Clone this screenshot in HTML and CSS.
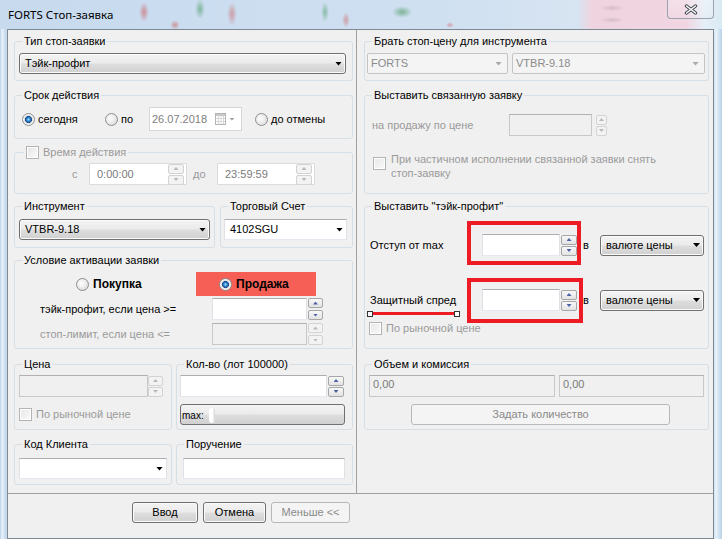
FILE: index.html
```html
<!DOCTYPE html>
<html lang="ru">
<head>
<meta charset="utf-8">
<title>FORTS Стоп-заявка</title>
<link rel="stylesheet" href="styles.css">
</head>
<body>
<div class="window">
  <header class="titlebar">
    <span class="title">FORTS Стоп-заявка</span>
    <span class="close-btn" aria-label="Закрыть">
      <svg width="14" height="11" viewBox="0 0 14 11"><path d="M2.5 2 L11.5 9 M11.5 2 L2.5 9" stroke="#3f4650" stroke-width="3.4" stroke-linecap="round" fill="none"/><path d="M2.5 2 L11.5 9 M11.5 2 L2.5 9" stroke="#fff" stroke-width="1.5" stroke-linecap="round" fill="none"/></svg>
    </span>
  </header>
  <main class="client">
    <div class="panes">
      <section class="pane pane-left">
        <fieldset class="grp g-type">
          <legend>Тип стоп-заявки</legend>
          <div class="combo combo-btn w-type"><span>Тэйк-профит</span><i class="tri"></i></div>
        </fieldset>

        <fieldset class="grp g-term">
          <legend>Срок действия</legend>
          <div class="term-row">
            <span class="opt w-today"><i class="radio on"></i>сегодня</span>
            <span class="opt w-po"><i class="radio"></i>по</span>
            <span class="date-box"><span class="date-text">26.07.2018</span><svg class="cal" width="11" height="12" viewBox="0 0 11 12"><rect x="0.5" y="0.5" width="10" height="11" fill="#fff" stroke="#b5b5b5"/><rect x="1" y="1" width="9" height="2" fill="#c8c8c8"/><path d="M1 5.5h9M1 8.5h9M3.5 3v8M6 3v8M8.5 3v8" stroke="#d8d8d8" stroke-width="1"/></svg><i class="tri tri-s"></i></span>
            <span class="opt"><i class="radio"></i>до отмены</span>
          </div>
        </fieldset>

        <fieldset class="grp g-time">
          <legend class="lg-check"><i class="check"></i><span class="dis-text">Время действия</span></legend>
          <div class="time-row">
            <span class="t-lbl t-s dis-text">с</span>
            <span class="time-box"><span class="time-text">0:00:00</span><span class="spin dis"><span class="sb"><i class="up"></i></span><span class="sb"><i class="dn"></i></span></span></span>
            <span class="t-lbl t-do dis-text">до</span>
            <span class="time-box"><span class="time-text">23:59:59</span><span class="spin dis"><span class="sb"><i class="up"></i></span><span class="sb"><i class="dn"></i></span></span></span>
          </div>
        </fieldset>

        <div class="pair pair-inst">
          <fieldset class="grp g-inst">
            <legend>Инструмент</legend>
            <div class="combo combo-btn w-inst"><span>VTBR-9.18</span><i class="tri"></i></div>
          </fieldset>
          <fieldset class="grp g-acc">
            <legend>Торговый Счет</legend>
            <div class="combo combo-white w-acc"><span>4102SGU</span><i class="tri"></i></div>
          </fieldset>
        </div>

        <fieldset class="grp g-cond">
          <legend>Условие активации заявки</legend>
          <div class="side-row">
            <span class="opt bold w-buy"><i class="radio"></i>Покупка</span>
            <span class="opt bold sell"><i class="radio on"></i>Продажа</span>
          </div>
          <div class="price-row">
            <span class="p-lbl">тэйк-профит, если цена &gt;=</span>
            <span class="edit w-cond"></span>
            <span class="spin"><span class="sb"><i class="up"></i></span><span class="sb"><i class="dn"></i></span></span>
          </div>
          <div class="price-row r2">
            <span class="p-lbl dis-text">стоп-лимит, если цена &lt;=</span>
            <span class="edit dis w-cond"></span>
            <span class="spin dis"><span class="sb"><i class="up"></i></span><span class="sb"><i class="dn"></i></span></span>
          </div>
        </fieldset>

        <div class="pair pair-qty">
          <fieldset class="grp g-left">
            <legend>Цена</legend>
            <div class="edit-row er-price"><span class="edit dis w-price"></span><span class="spin dis"><span class="sb"><i class="up"></i></span><span class="sb"><i class="dn"></i></span></span></div>
            <div class="chk-row cr-price"><i class="check"></i><span class="dis-text">По рыночной цене</span></div>
          </fieldset>
          <fieldset class="grp g-right">
            <legend>Кол-во (лот 100000)</legend>
            <div class="edit-row er-qty"><span class="edit w-qty"></span><span class="spin sp-qty"><span class="sb"><i class="up"></i></span><span class="sb"><i class="dn"></i></span></span></div>
            <div class="slider"><span class="max">max:</span><i class="thumb"></i></div>
          </fieldset>
        </div>

        <div class="pair pair-client">
          <fieldset class="grp g-left g-cl">
            <legend>Код Клиента</legend>
            <div class="combo combo-white w-client"><span></span><i class="tri"></i></div>
          </fieldset>
          <fieldset class="grp g-right g-cl">
            <legend>Поручение</legend>
            <span class="edit w-order"></span>
          </fieldset>
        </div>
      </section>

      <section class="pane pane-right">
        <fieldset class="grp r-src">
          <legend>Брать стоп-цену для инструмента</legend>
          <div class="src-row">
            <div class="combo combo-dis w-forts"><span>FORTS</span><i class="tri"></i></div>
            <div class="combo combo-dis w-vtbr"><span>VTBR-9.18</span><i class="tri"></i></div>
          </div>
        </fieldset>

        <fieldset class="grp r-link">
          <legend>Выставить связанную заявку</legend>
          <div class="link-row">
            <span class="dis-text l-lbl">на продажу по цене</span>
            <span class="edit dis w-link"></span>
            <span class="spin dis sp-small"><span class="sb"><i class="up"></i></span><span class="sb"><i class="dn"></i></span></span>
          </div>
          <div class="link-chk">
            <i class="check"></i>
            <span class="dis-text">При частичном исполнении связанной заявки снять<br>стоп-заявку</span>
          </div>
        </fieldset>

        <fieldset class="grp r-tp">
          <legend>Выставить "тэйк-профит"</legend>
          <div class="tp-row">
            <span class="tp-lbl">Отступ от max</span>
            <span class="edit w-tp"></span>
            <span class="spin sp-tp"><span class="sb"><i class="up"></i></span><span class="sb"><i class="dn"></i></span></span>
            <span class="tp-v">в</span>
            <div class="combo combo-btn w-cur"><span>валюте цены</span><i class="tri"></i></div>
            <span class="mark m1"></span>
          </div>
          <div class="tp-row r2">
            <span class="tp-lbl">Защитный спред</span>
            <span class="edit w-tp"></span>
            <span class="spin sp-tp"><span class="sb"><i class="up"></i></span><span class="sb"><i class="dn"></i></span></span>
            <span class="tp-v">в</span>
            <div class="combo combo-btn w-cur"><span>валюте цены</span><i class="tri"></i></div>
            <span class="mark m2"></span>
            <span class="uline"></span>
          </div>
          <div class="chk-row tp-chk"><i class="check"></i><span class="dis-text">По рыночной цене</span></div>
        </fieldset>

        <fieldset class="grp r-vol">
          <legend>Объем и комиссия</legend>
          <div class="vol-row"><span class="edit dis tx w-v1">0,00</span><span class="edit dis tx w-v2">0,00</span></div>
          <span class="btn dis w-set">Задать количество</span>
        </fieldset>
      </section>
    </div>
    <footer class="footer">
      <span class="btn b-ok">Ввод</span>
      <span class="btn b-cancel">Отмена</span>
      <span class="btn dis b-less">Меньше &lt;&lt;</span>
    </footer>
  </main>
</div>
</body>
</html>
```

FILE: styles.css
```css
* { box-sizing: border-box; }
html, body { margin: 0; padding: 0; }
body {
  width: 722px; height: 539px; overflow: hidden;
  font: 11px/13px "Liberation Sans", Arial, sans-serif;
  color: #000;
  background: #c9dbee;
}
i { font-style: normal; }

.window {
  width: 722px; height: 539px;
  display: flex; flex-direction: column;
  background: linear-gradient(90deg, #b7cde5 0, #e9f2fa 2px, #cbdcee 5px, #c6d9ec 7px, #c6d9ec 713px, #eaf4fb 716px, #cfe3f1 719px, #b9d2e8 722px);
}

/* ---------- title bar ---------- */
.titlebar {
  height: 29px; flex: none;
  display: flex; justify-content: space-between; align-items: flex-start;
  background:
    radial-gradient(ellipse 5px 10px at 144px 12px, rgba(205,80,80,.55), rgba(205,80,80,0)),
    radial-gradient(ellipse 5px 5px at 175px 25px, rgba(205,80,80,.5), rgba(205,80,80,0)),
    radial-gradient(ellipse 5px 10px at 200px 9px, rgba(70,150,90,.55), rgba(70,150,90,0)),
    radial-gradient(ellipse 5px 12px at 232px 14px, rgba(205,80,80,.45), rgba(205,80,80,0)),
    radial-gradient(ellipse 4px 10px at 325px 12px, rgba(70,150,90,.5), rgba(70,150,90,0)),
    radial-gradient(ellipse 4px 8px at 346px 20px, rgba(205,80,80,.45), rgba(205,80,80,0)),
    radial-gradient(ellipse 10px 6px at 402px 12px, rgba(70,150,90,.6), rgba(70,150,90,0)),
    radial-gradient(ellipse 4px 3px at 450px 25px, rgba(205,80,80,.45), rgba(205,80,80,0)),
    radial-gradient(ellipse 12px 3px at 612px 8px, rgba(150,130,140,.3), rgba(150,130,140,0)),
    radial-gradient(ellipse 12px 3px at 612px 20px, rgba(150,130,140,.3), rgba(150,130,140,0)),
    linear-gradient(90deg, #c7daee 0, #cfe0f1 60%, #d7e4f2 80%, #efd4df 82%, #f1d6e1 95%, #e6eef6 97.5%, #d9eaf4 100%);
}
.title {
  margin: 6px 0 0 8px;
  font: 11.5px/17px "Noto Sans", "Liberation Sans", sans-serif;
  color: #000;
}
.close-btn {
  width: 47px; height: 19px; margin-right: 8px;
  display: flex; align-items: center; justify-content: center;
  border: 1px solid #9aa3ad; border-top: none;
  border-radius: 0 0 4px 4px;
  background: linear-gradient(rgba(255,255,255,.25), rgba(255,255,255,.05));
}

/* ---------- client area ---------- */
.client {
  flex: 1; min-height: 0;
  margin: 0 8px 0 7px;
  border: 1px solid #7d8995;
  background: #f0f0f0;
  display: flex; flex-direction: column;
}
.panes {
  height: 464px; flex: none;
  display: flex;
  border-bottom: 1px solid #a0a0a0;
}
.pane { display: flex; flex-direction: column; padding-top: 5px; }
.pane > * { flex: none; }
.pane-left { width: 349px; padding-left: 6px; padding-right: 3px; border-right: 1px solid #a0a0a0; }
.pane-right { width: 356px; padding-left: 7px; padding-right: 4px; }

.footer {
  flex: 1;
  display: flex; align-items: flex-start; gap: 5px;
  padding: 8px 0 0 124px;
}

/* ---------- group boxes ---------- */
.grp {
  margin: 0; padding: 0; min-width: 0;
  border: 1px solid #d5dfe5; border-radius: 3px;
}
.grp > legend {
  margin-left: 7px; padding: 0 2px;
  height: 13px; line-height: 13px;
}
.lg-check { display: flex; align-items: center; gap: 4px; }
.grp > legend.lg-check { margin-left: 9px; }

.pair { display: flex; }
.pair > .grp { flex: none; }

.g-type { padding: 5px 0 6px; }
.g-term { margin-top: 8px; padding: 5px 0 7px; }
.g-time { margin-top: 7px; padding: 4px 0 8px; }
.pair-inst { margin-top: 6px; gap: 5px; }
.g-inst { width: 201px; padding: 6px 0 7px; }
.g-acc { width: 133px; padding: 6px 0 7px; }
.g-cond { margin-top: 6px; padding: 5px 0 3px; }
.pair-qty { margin-top: 9px; gap: 4px; }
.g-left { width: 158px; padding: 4px 0 4px; }
.g-right { width: 177px; padding: 4px 0 4px; }
.pair-client { margin-top: 8px; gap: 4px; }
.g-cl { padding: 7px 0 5px; }

.r-src { padding: 5px 0 6px; }
.r-link { margin-top: 8px; padding: 12px 0 13px; }
.r-tp { margin-top: 6px; padding: 21px 0 13px; }
.r-vol { margin-top: 9px; padding: 4px 0 4px; }

/* ---------- common controls ---------- */
.dis-text { color: #9a9a9a; }

.combo {
  display: flex; align-items: center; justify-content: space-between;
  height: 21px; padding: 0 3px 0 5px;
  border-radius: 3px;
  white-space: nowrap;
}
.combo-btn {
  border: 1px solid #707070;
  background: linear-gradient(#f3f3f3 0, #ebebeb 48%, #dedede 52%, #d0d0d0 100%);
  box-shadow: inset 0 0 0 1px #fbfbfb;
}
.combo-white {
  border: 1px solid; border-color: #abadb3 #dfe1e7 #e3e9ef #dfe1e7;
  border-radius: 0;
  background: #fff;
}
.combo-dis {
  border: 1px solid #c4c4c4; border-radius: 2px;
  background: #f4f4f4; color: #8a8a8a;
  padding-left: 3px; padding-right: 5px;
}
.tri {
  display: block; flex: none;
  width: 7px; height: 4px;
  background: #000;
  clip-path: polygon(0 0, 100% 0, 50% 100%);
}
.combo-dis .tri { background: #a9a9a9; }
.tri-s { width: 6px; height: 3px; background: #a0a0a0; }

.edit {
  display: block; flex: none;
  background: #fff;
  border: 1px solid; border-color: #abadb3 #dfe1e7 #e3e9ef #dfe1e7;
}
.edit.dis { background: #f0f0f0; border-color: #b1b1b1 #c8c8c8 #c8c8c8 #c8c8c8; }
.edit.tx { color: #7a7a7a; padding: 2px 0 0 3px; line-height: 13px; }

.spin { display: flex; flex-direction: column; gap: 1px; width: 15px; flex: none; }
.sb {
  height: 10px;
  display: flex; align-items: center; justify-content: center;
  border: 1px solid #a7a7a7; border-radius: 2px;
  background: linear-gradient(#f8f8f8, #e3e3e3);
}
.spin.dis .sb { border-color: #d3d3d3; background: #f3f3f3; }
.up, .dn { display: block; width: 5px; height: 3px; background: #4d62a4; }
.up { clip-path: polygon(50% 0, 100% 100%, 0 100%); }
.dn { clip-path: polygon(0 0, 100% 0, 50% 100%); }
.spin.dis .up, .spin.dis .dn { background: #b9b9b9; }

.radio {
  display: block; flex: none;
  width: 13px; height: 13px; border-radius: 50%;
  border: 1px solid #8e8f8f;
  background: radial-gradient(circle at 40% 40%, #ffffff 0, #ececec 45%, #d2d2d2 100%);
}
.radio.on {
  background: radial-gradient(circle at 50% 50%, #a8dcff 0, #3a92d8 1.5px, #1a4c8c 3.2px, #dcdcdc 3.8px, #f7f7f7 5px, #d4d4d4 100%);
}
.check {
  display: block; flex: none;
  width: 13px; height: 13px;
  border: 1px solid #b3b3b3;
  background: linear-gradient(135deg, #e6e6e6, #fafafa);
  box-shadow: inset 0 0 0 1px #fff;
}

.opt { display: flex; align-items: center; gap: 3px; white-space: nowrap; }
.opt.bold { font-weight: bold; font-size: 12px; gap: 4px; }

.btn {
  display: flex; align-items: center; justify-content: center; flex: none;
  height: 21px;
  border: 1px solid #707070; border-radius: 3px;
  background: linear-gradient(#f3f3f3 0, #ebebeb 48%, #dedede 52%, #d0d0d0 100%);
  box-shadow: inset 0 0 0 1px #fbfbfb;
  white-space: nowrap;
}
.btn.dis { border-color: #b5b9bc; background: #f4f4f4; color: #8a8a8a; box-shadow: none; }
.b-ok { width: 66px; }
.b-cancel { width: 63px; }
.b-less { width: 79px; }

/* ---------- left pane specifics ---------- */
.w-type { margin-left: 4px; width: 327px; }

.term-row { display: flex; align-items: center; height: 24px; padding-left: 7px; }
.w-today { width: 83px; }
.w-po { width: 44px; }
.date-box {
  display: flex; align-items: center; flex: none;
  width: 93px; height: 24px; margin-right: 13px;
  padding: 0 6px 0 2px;
  border: 1px solid #d6d6d6; background: #fff;
  color: #808080;
}
.date-text { flex: 1; }
.cal { display: block; margin-right: 3px; }

.time-row { display: flex; align-items: center; height: 22px; padding-left: 57px; }
.t-s { width: 17px; }
.t-do { margin-left: 6px; width: 24px; }
.time-box {
  display: flex; align-items: center; flex: none;
  width: 98px; height: 22px;
  padding: 0 2px 0 7px;
  border: 1px solid #dcdcdc; background: #fff;
  color: #7a7a7a;
}
.time-text { flex: 1; }
.time-box .spin { width: 16px; }

.w-inst { margin-left: 4px; width: 191px; }
.w-acc { margin-left: 3px; width: 123px; }

.side-row { display: flex; align-items: center; height: 24px; padding-left: 61px; }
.w-buy { width: 120px; }
.sell { width: 120px; height: 24px; padding-left: 23px; background: #f55f55; }
.price-row { display: flex; align-items: center; margin-top: 2px; padding-left: 25px; }
.price-row.r2 { margin-top: 3px; }
.p-lbl { width: 172px; white-space: nowrap; }
.w-cond { width: 95px; height: 22px; }
.price-row .spin { margin-left: 1px; gap: 2px; }

.edit-row { display: flex; align-items: center; }
.er-price { margin-left: 4px; }
.w-price { width: 129px; height: 22px; }
.er-qty { margin-left: 3px; }
.w-qty { width: 147px; height: 22px; }
.sp-qty { margin-left: 1px; width: 16px; }
.chk-row { display: flex; align-items: center; gap: 4px; white-space: nowrap; }
.cr-price { margin: 7px 0 0 4px; height: 21px; }

.slider {
  display: flex; align-items: center;
  margin: 7px 0 0 3px; width: 165px; height: 21px;
  padding: 1px 0 0 1px;
  border: 1px solid #707070; border-radius: 3px;
  background: linear-gradient(#f3f3f3 0, #ebebeb 48%, #dedede 52%, #d0d0d0 100%);
  font-size: 10px;
}
.thumb {
  display: block; width: 6px; height: 15px; margin-left: 5px;
  border-radius: 3px;
  background: linear-gradient(90deg, #fff 0, #fff 55%, #d5d5d5 100%);
}

.w-client { margin-left: 4px; width: 148px; }
.w-order { margin-left: 6px; width: 162px; height: 21px; }

/* ---------- right pane specifics ---------- */
.src-row { display: flex; gap: 4px; margin-left: 2px; }
.w-forts { width: 141px; }
.w-vtbr { width: 193px; }

.link-row { display: flex; align-items: center; height: 22px; padding-left: 7px; }
.l-lbl { width: 137px; }
.w-link { width: 83px; height: 22px; }
.sp-small { margin-left: 4px; width: 11px; gap: 1px; }
.sp-small .sb { height: 10px; }
.link-chk { display: flex; align-items: flex-start; gap: 5px; margin-top: 16px; padding-left: 8px; line-height: 14px; }
.link-chk .check { margin-top: 5px; }

.tp-row { position: relative; display: flex; align-items: center; height: 22px; padding-left: 5px; }
.tp-row.r2 { margin-top: 33px; }
.tp-lbl { width: 112px; white-space: nowrap; }
.w-tp { width: 78px; height: 22px; }
.sp-tp { margin-left: 1px; width: 16px; }
.tp-v { width: 23px; padding-left: 6px; }
.w-cur { width: 104px; }
.tp-chk { margin-top: 11px; padding-left: 4px; height: 13px; }

.mark { position: absolute; border: 4px solid #ed1c24; }
.m1 { left: 102px; top: -13px; width: 114px; height: 44px; }
.m2 { left: 102px; top: -11px; width: 116px; height: 45px; }
.uline {
  position: absolute; left: 2px; top: 22px; width: 93px; height: 4px;
  background: linear-gradient(#ed1c24, #ed1c24) center / calc(100% - 6px) 3px no-repeat;
}
.uline::before, .uline::after {
  content: ""; position: absolute; top: 0;
  width: 4px; height: 4px;
  border: 1px solid #333; background: #fff;
}
.uline::before { left: 0; }
.uline::after { right: 0; }

.vol-row { display: flex; gap: 4px; padding-left: 4px; }
.w-v1 { width: 186px; height: 22px; }
.w-v2 { width: 145px; height: 22px; }
.w-set { margin: 7px 0 0 46px; width: 259px; }
```
